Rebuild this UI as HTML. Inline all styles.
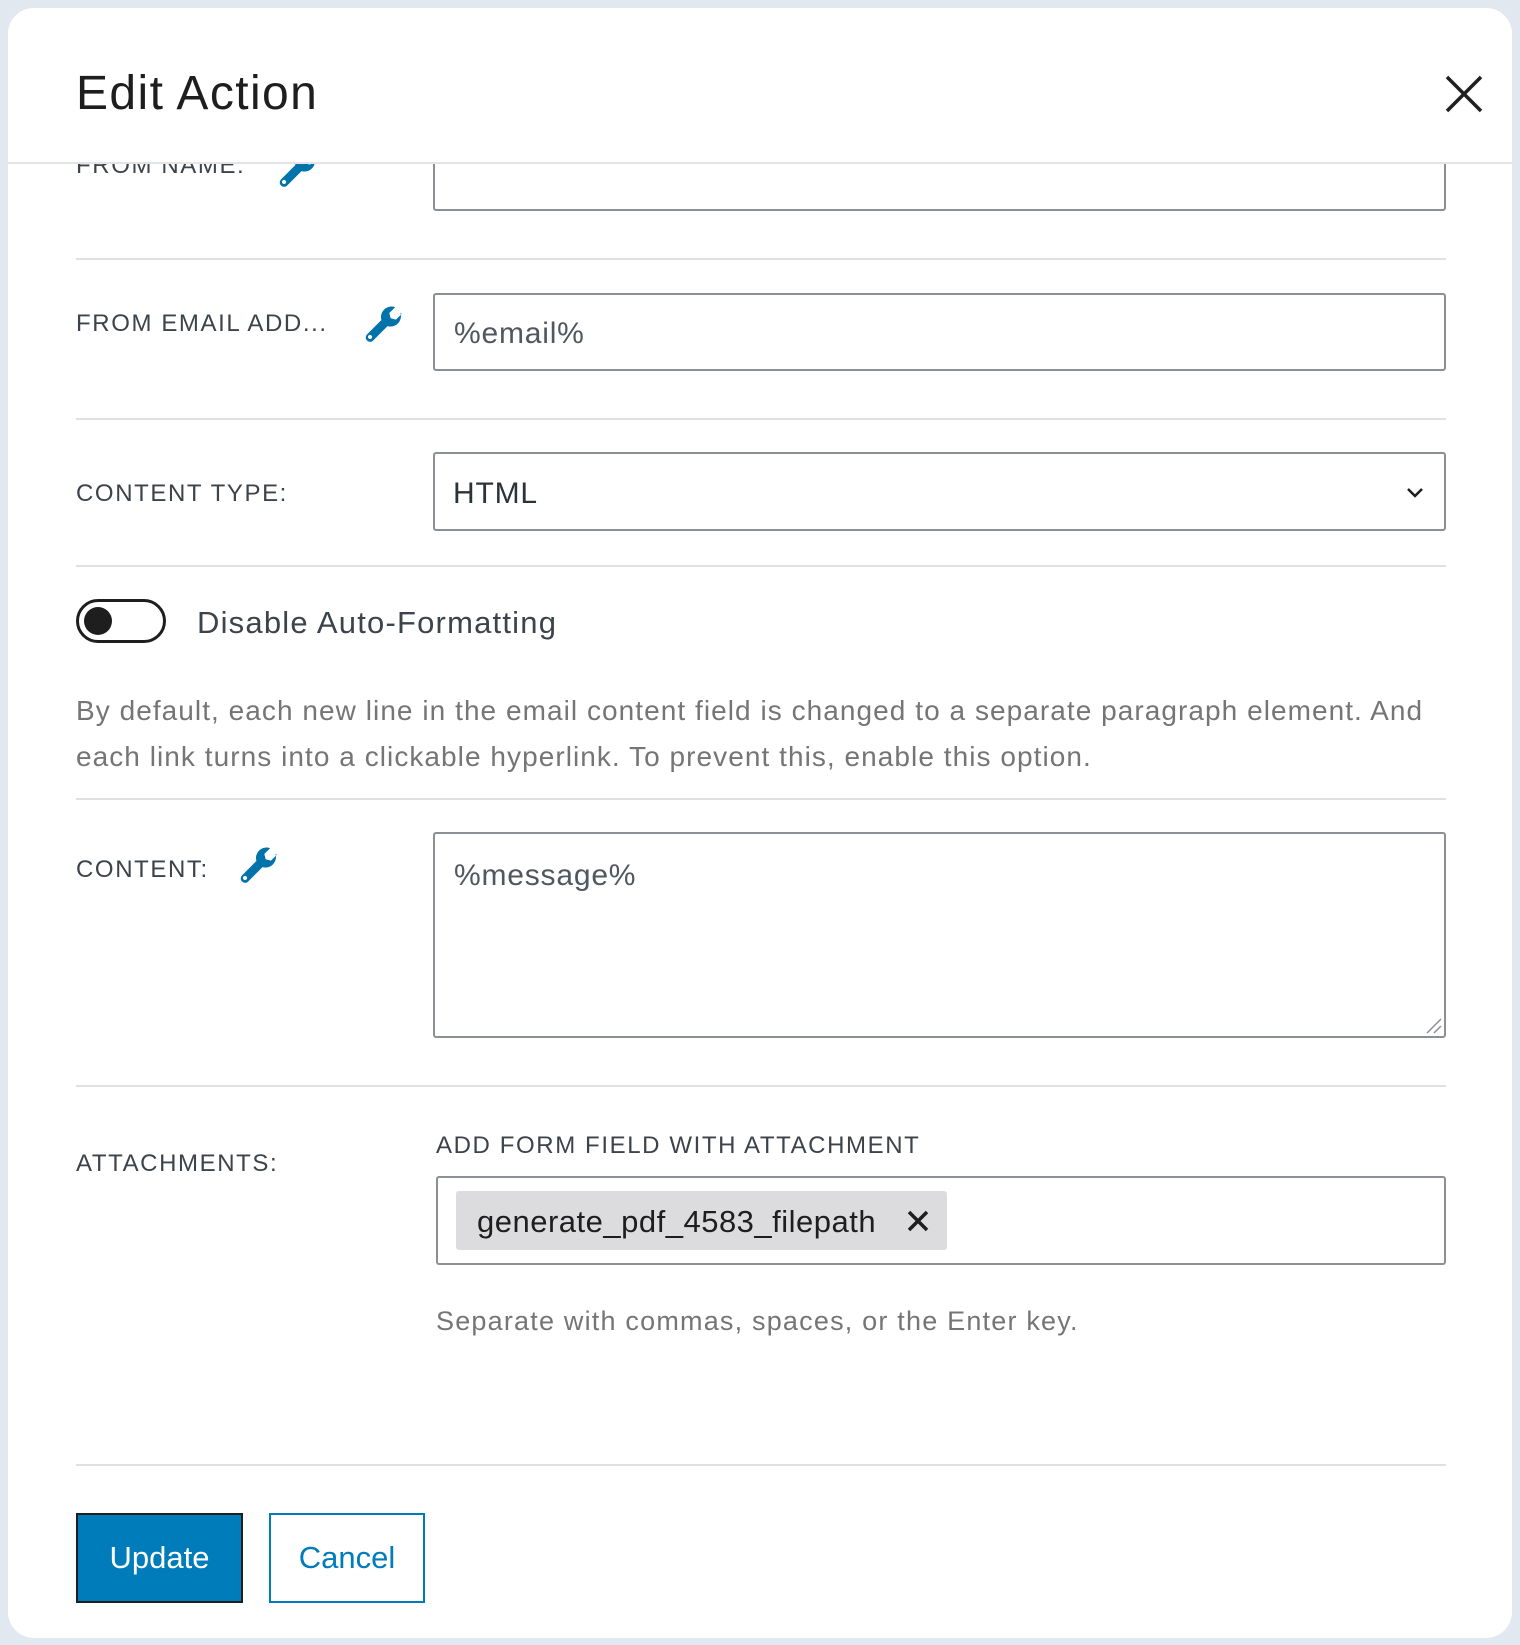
<!DOCTYPE html>
<html><head><meta charset="utf-8"><style>
*{margin:0;padding:0;box-sizing:border-box}
html,body{width:1520px;height:1645px;overflow:hidden;background:#e2e8f0;font-family:"Liberation Sans",sans-serif}
.card{position:absolute;left:8px;top:8px;width:1504px;height:1630px;background:#fff;border-radius:26px;overflow:hidden}
.a{position:absolute}
.hdr{left:0;top:0;width:1504px;height:156px;border-bottom:2px solid #e2e4e7;background:#fff;z-index:2}
.title{left:68px;top:58px;font-size:48px;letter-spacing:1.4px;color:#1e1e1e;white-space:nowrap}
.lbl{font-size:24px;letter-spacing:1.6px;color:#3c434a;white-space:nowrap}
.line{height:2px;background:#e0e0e0;left:68px;width:1370px}
.inp{border:2px solid #8c8f94;border-radius:3px;background:#fff}
.txt{font-size:30px;letter-spacing:0.8px;color:#50575e;white-space:nowrap}
</style></head><body>
<div class="card">
<div class="a hdr"><div class="a title">Edit Action</div>
<svg class="a" style="left:1437px;top:67px" width="38" height="38" viewBox="0 0 38 38"><path d="M2 2L36 36M36 2L2 36" stroke="#1e1e1e" stroke-width="3.5"/></svg>
</div>

<div class="a lbl" style="left:68px;top:144px">FROM NAME:</div>
<svg class="a" style="left:268px;top:140px" width="42" height="42" viewBox="0 0 24 24"><path fill="#0073aa" d="M22.7 6.2l-3.3 3.3-3-.8-.8-3 3.3-3.3c-2.1-.8-4.6-.3-6.3 1.4-1.6 1.6-2.1 3.9-1.5 5.9L2.9 17.9c-1 1-1 2.6 0 3.5 1 1 2.6 1 3.5 0l8.2-8.2c2 .6 4.3.1 5.9-1.5 1.7-1.7 2.2-4.2 1.4-6.3zM4.6 20.6a1.2 1.2 0 110-2.4 1.2 1.2 0 010 2.4z"/></svg>
<div class="a inp" style="left:425px;top:120px;width:1013px;height:83px"></div>
<div class="a line" style="top:250px"></div>

<div class="a lbl" style="left:68px;top:302px">FROM EMAIL ADD...</div>
<svg class="a" style="left:354px;top:295px" width="42" height="42" viewBox="0 0 24 24"><path fill="#0073aa" d="M22.7 6.2l-3.3 3.3-3-.8-.8-3 3.3-3.3c-2.1-.8-4.6-.3-6.3 1.4-1.6 1.6-2.1 3.9-1.5 5.9L2.9 17.9c-1 1-1 2.6 0 3.5 1 1 2.6 1 3.5 0l8.2-8.2c2 .6 4.3.1 5.9-1.5 1.7-1.7 2.2-4.2 1.4-6.3zM4.6 20.6a1.2 1.2 0 110-2.4 1.2 1.2 0 010 2.4z"/></svg>
<div class="a inp" style="left:425px;top:285px;width:1013px;height:78px"></div>
<div class="a txt" style="left:446px;top:309px">%email%</div>
<div class="a line" style="top:410px"></div>

<div class="a lbl" style="left:68px;top:472px">CONTENT TYPE:</div>
<div class="a inp" style="left:425px;top:444px;width:1013px;height:79px"></div>
<div class="a txt" style="left:445px;top:469px;color:#2c3338">HTML</div>
<svg class="a" style="left:1397px;top:477px" width="20" height="14" viewBox="0 0 20 14"><path d="M3 4l7 7 7-7" fill="none" stroke="#1e1e1e" stroke-width="2.5"/></svg>
<div class="a line" style="top:557px"></div>

<div class="a" style="left:68px;top:591px;width:90px;height:44px;border:3px solid #1e1e1e;border-radius:22px"></div>
<div class="a" style="left:76px;top:599px;width:28px;height:28px;border-radius:50%;background:#1e1e1e"></div>
<div class="a" style="left:189px;top:597px;font-size:31px;letter-spacing:1.2px;color:#3c434a;white-space:nowrap">Disable Auto-Formatting</div>
<div class="a" style="left:68px;top:680px;width:1440px;font-size:28px;letter-spacing:1.05px;line-height:46px;color:#757575;white-space:nowrap">By default, each new line in the email content field is changed to a separate paragraph element. And<br>each link turns into a clickable hyperlink. To prevent this, enable this option.</div>
<div class="a line" style="top:790px"></div>

<div class="a lbl" style="left:68px;top:848px">CONTENT:</div>
<svg class="a" style="left:229px;top:836px" width="42" height="42" viewBox="0 0 24 24"><path fill="#0073aa" d="M22.7 6.2l-3.3 3.3-3-.8-.8-3 3.3-3.3c-2.1-.8-4.6-.3-6.3 1.4-1.6 1.6-2.1 3.9-1.5 5.9L2.9 17.9c-1 1-1 2.6 0 3.5 1 1 2.6 1 3.5 0l8.2-8.2c2 .6 4.3.1 5.9-1.5 1.7-1.7 2.2-4.2 1.4-6.3zM4.6 20.6a1.2 1.2 0 110-2.4 1.2 1.2 0 010 2.4z"/></svg>
<div class="a inp" style="left:425px;top:824px;width:1013px;height:206px"></div>
<div class="a txt" style="left:446px;top:851px">%message%</div>
<svg class="a" style="left:1416px;top:1008px" width="18" height="18" viewBox="0 0 18 18"><path d="M17 3L3 17M17 10L10 17" stroke="#8c8f94" stroke-width="1.5"/></svg>
<div class="a line" style="top:1077px"></div>

<div class="a lbl" style="left:68px;top:1142px">ATTACHMENTS:</div>
<div class="a lbl" style="left:428px;top:1124px">ADD FORM FIELD WITH ATTACHMENT</div>
<div class="a inp" style="left:428px;top:1168px;width:1010px;height:89px"></div>
<div class="a" style="left:448px;top:1183px;width:491px;height:59px;background:#dcdcde;border-radius:3px"></div>
<div class="a" style="left:469px;top:1196px;font-size:31px;letter-spacing:0.5px;color:#1e1e1e;white-space:nowrap">generate_pdf_4583_filepath</div>
<svg class="a" style="left:898px;top:1201px" width="24" height="24" viewBox="0 0 24 24"><path d="M3 3L21 21M21 3L3 21" stroke="#1e1e1e" stroke-width="3.5"/></svg>
<div class="a" style="left:428px;top:1298px;font-size:27px;letter-spacing:1.2px;color:#757575;white-space:nowrap">Separate with commas, spaces, or the Enter key.</div>
<div class="a line" style="top:1456px"></div>

<div class="a" style="left:68px;top:1505px;width:167px;height:90px;background:#007cba;border:2px solid #1e1e1e;color:#fff;font-size:31px;text-align:center;line-height:86px">Update</div>
<div class="a" style="left:261px;top:1505px;width:156px;height:90px;background:#fff;border:2px solid #007cba;color:#007cba;font-size:31px;text-align:center;line-height:86px">Cancel</div>
</div>
</body></html>
